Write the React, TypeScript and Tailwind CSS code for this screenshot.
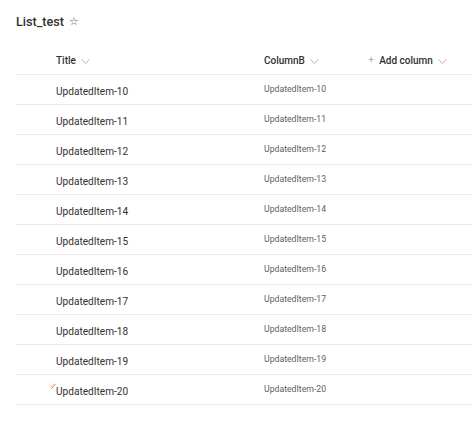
import React from 'react';

const ITEMS = Array.from({ length: 11 }, (_, i) => `UpdatedItem-${i + 10}`);

function Chevron() {
  return (
    <svg width="9" height="5" viewBox="0 0 9 5" className="ml-[5px] mt-[1px]" fill="none">
      <path d="M0.5 0.5 L4.5 4.3 L8.5 0.5" stroke="#a19f9d" strokeWidth="0.8" />
    </svg>
  );
}

function NewGlimmer() {
  return (
    <svg width="7" height="7" viewBox="0 0 7 7" className="absolute left-[-6px] top-[-3px]" fill="none">
      <path d="M1 6 L6 1" stroke="#e8a14f" strokeWidth="0.9" />
      <path d="M0.5 3.2 L2.8 3.6" stroke="#e8a14f" strokeWidth="0.9" />
      <path d="M3.6 0.5 L3.8 2.6" stroke="#e8a14f" strokeWidth="0.9" />
    </svg>
  );
}

export default function App() {
  return (
    <div className="min-h-[430px] w-[474px] bg-white pl-4 pr-[2px] text-[#323130]" style={{ fontFamily: 'Roboto, "Open Sans", sans-serif' }}>
      <div className="flex h-[47px] items-start pt-[12px]">
        <h1 className="text-[12.6px] font-medium leading-5 text-[#323130]">List_test</h1>
        <span className="ml-[5px] text-[11px] leading-5 text-[#605e5c]">☆</span>
      </div>

      <div className="flex h-[28px] items-center whitespace-nowrap border-b border-[#edebe9] text-[10px] font-medium text-[#323130]">
        <div className="flex w-[248px] items-center pl-[40px]">
          Title
          <Chevron />
        </div>
        <div className="flex w-[104px] items-center">
          ColumnB
          <Chevron />
        </div>
        <div className="flex items-center">
          <span className="mr-[5px] text-[11px] font-light text-[#8a8886]">+</span>
          Add column
          <Chevron />
        </div>
      </div>

      {ITEMS.map((item, i) => (
        <div key={item} className="flex h-[30px] items-center border-b border-[#edebe9]">
          <div className="w-[248px] pl-[40px]">
            <span className="relative text-[10.1px] text-[#323130]">
              {i === ITEMS.length - 1 ? <NewGlimmer /> : null}
              {item}
            </span>
          </div>
          <div className="text-[8.7px] text-[#605e5c]">{item}</div>
        </div>
      ))}
    </div>
  );
}
